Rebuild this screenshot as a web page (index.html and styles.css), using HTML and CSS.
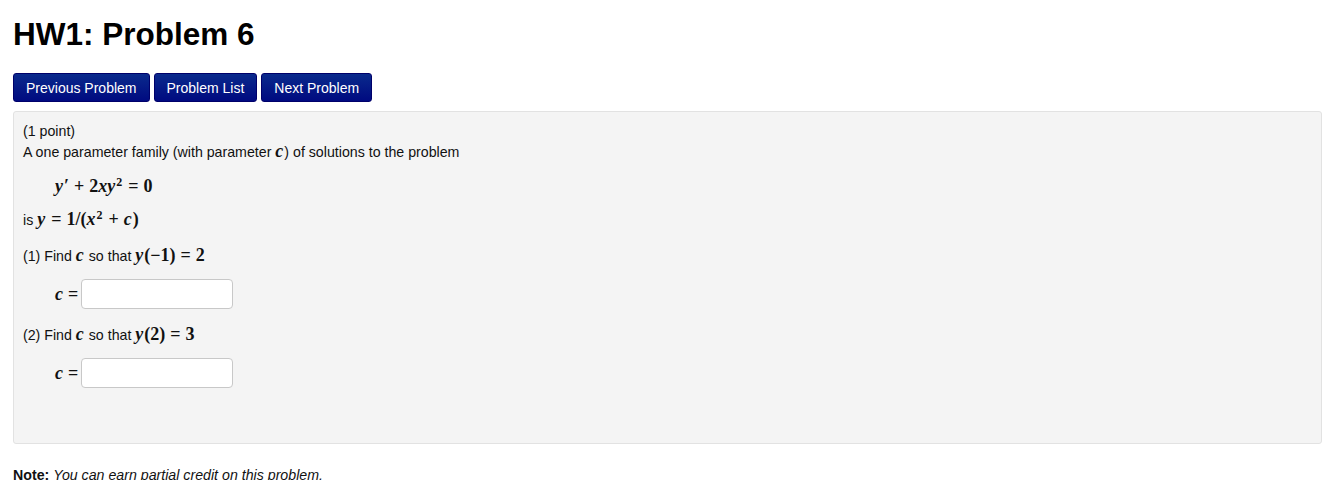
FILE: index.html
```html
<!DOCTYPE html>
<html lang="en">

<head>
    <meta charset="UTF-8">
    <meta name="viewport" content="width=device-width, initial-scale=1.0">
    <title>HW1: Problem 6</title>
    <link rel="stylesheet" href="styles.css">
</head>

<body>
    <div class="page">
        <h1 class="problemTitle">HW1: Problem 6</h1>
        <div class="problemNav">
            <button class="navBtn">Previous Problem</button>
            <button class="navBtn">Problem List</button>
            <button class="navBtn">Next Problem</button>
        </div>
        <div class="problemBox">
            <div class="line">(1 point)</div>
            <div class="line">A one parameter family (with parameter <span class="m v">c</span>) of solutions to the problem</div>
            <div class="displayMath">
                <span class="m v">y</span><span class="m">&prime;</span><span class="m op">+</span><span class="m">2</span><span class="m v">xy</span><sup class="m">2</sup><span class="m op">=</span><span class="m">0</span>
            </div>
            <div class="line">is <span class="m v">y</span><span class="m op">=</span><span class="m">1/(</span><span class="m v">x</span><sup class="m">2</sup><span class="m op">+</span><span class="m v">c</span><span class="m">)</span></div>
            <div class="line part">(1) Find <span class="m v">c</span> so that <span class="m v">y</span><span class="m">(&minus;1)</span><span class="m op">=</span><span class="m">2</span></div>
            <div class="answerRow">
                <span class="m v">c</span><span class="m op">=</span>
                <input class="answer" type="text">
            </div>
            <div class="line part">(2) Find <span class="m v">c</span> so that <span class="m v">y</span><span class="m">(2)</span><span class="m op">=</span><span class="m">3</span></div>
            <div class="answerRow">
                <span class="m v">c</span><span class="m op">=</span>
                <input class="answer" type="text">
            </div>
        </div>
        <div class="note"><b>Note:</b> <i>You can earn partial credit on this problem.</i></div>
    </div>
</body>

</html>
```

FILE: styles.css
```css
* {
    box-sizing: border-box;
    padding: 0;
    margin: 0px;
}

body {
    font-family: "Liberation Sans", Arial, Helvetica, sans-serif;
    font-size: 14.2px;
    color: #111;
    background: #fff;
}

.page {
    padding: 0 4px 0 13px;
}

.problemTitle {
    font-size: 31.5px;
    font-weight: 700;
    line-height: 37px;
    margin-top: 16px;
    color: #000;
}

.problemNav {
    display: flex;
    gap: 4px;
    margin-top: 20px;
}

.navBtn {
    height: 29px;
    padding: 0 12px;
    font-family: "Liberation Sans", Arial, Helvetica, sans-serif;
    font-size: 14px;
    color: #fff;
    background: linear-gradient(to bottom, #0a2a8c, #000a80);
    border: 1px solid #00006a;
    border-radius: 3px;
}

.problemBox {
    margin-top: 9px;
    background-color: #f4f4f4;
    border: 1px solid #e2e2e2;
    border-radius: 3px;
    padding: 9px 9px 58px 9px;
    height: 333px;
}

.line {
    line-height: 20px;
}

.m {
    font-family: "Liberation Serif", "Times New Roman", serif;
    font-weight: 700;
    font-size: 18px;
}

.m.v {
    font-style: italic;
    padding-right: 1px;
}

.m.op {
    padding: 0 5px;
}

sup.m {
    font-size: 12px;
    vertical-align: 6px;
    line-height: 0;
    padding: 0 1px 0 0;
}

.displayMath {
    line-height: 20px;
    margin: 14px 0 12px 32px;
}

.part {
    margin-top: 15px;
}

.answerRow {
    display: flex;
    align-items: center;
    margin: 13px 0 14px 32px;
}

.answerRow .op {
    padding-left: 4px;
    padding-right: 3px;
}

.answer {
    width: 152px;
    height: 30px;
    background: #fff;
    border: 1px solid #c8c8c8;
    border-radius: 4px;
}

.note {
    margin-top: 23px;
    line-height: 16px;
}
```
